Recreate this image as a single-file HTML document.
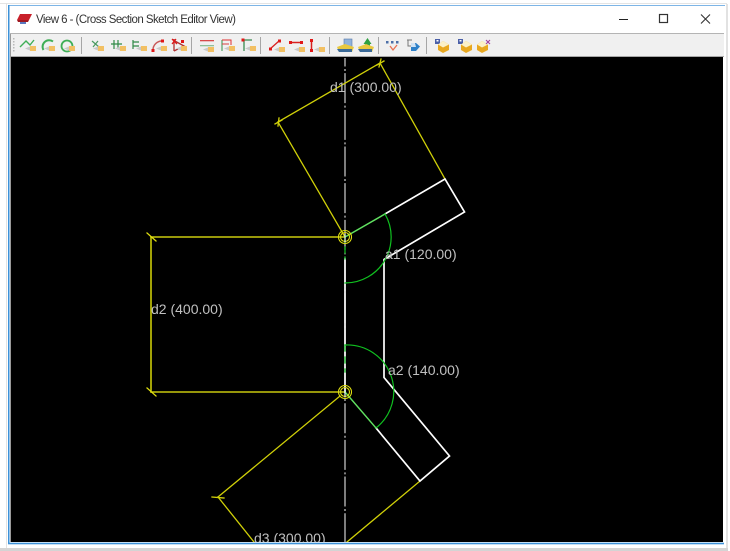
<!DOCTYPE html>
<html><head><meta charset="utf-8"><title>View 6</title>
<style>html,body{margin:0;padding:0;background:#fff;width:730px;height:551px;overflow:hidden}svg{display:block}</style>
</head><body>
<svg xmlns="http://www.w3.org/2000/svg" width="730" height="551" viewBox="0 0 730 551">
<defs>
<g id="tag"><rect x="0" y="0" width="6" height="5" fill="#f2c063"/><path d="M-5 2.500L0 0.500V4.500Z" fill="#c9c9c9"/></g>
<clipPath id="cv"><rect x="11" y="58" width="712" height="484"/></clipPath>
</defs>
<rect width="730" height="551" fill="#fff"/>
<rect x="0" y="3" width="727" height="1" fill="#e4e4e4"/>
<rect x="6" y="3" width="1" height="546" fill="#e2e2e2"/>
<rect x="726" y="4" width="2" height="546" fill="#e2e2e2"/>
<rect x="0" y="548" width="728" height="3" fill="#d4d4d4"/>
<rect x="7" y="5" width="718" height="543" fill="#fff"/>
<rect x="8" y="5" width="717" height="1" fill="#7db5e6"/>
<rect x="8" y="5" width="1.500" height="539" fill="#3d92d8"/>
<rect x="8" y="542.700" width="716" height="1.600" fill="#3d92d8"/>
<rect x="10" y="34" width="714" height="23" fill="#f0f0f0"/>
<rect x="10" y="33" width="714" height="1" fill="#b4b4b4"/>
<rect x="10" y="56" width="714" height="1" fill="#a8a8a8"/>
<rect x="10" y="34" width="1" height="508" fill="#9a9a9a"/>
<rect x="11" y="57" width="712" height="485" fill="#000"/>

<!-- title -->
<path d="M20 14H32L29 20H17Z" fill="#c8202a"/><path d="M17 20H29L28 22H18Z" fill="#a01820"/><rect x="20" y="22" width="6" height="2" fill="#5a78c0"/>
<text x="36" y="23" font-family="Liberation Sans,sans-serif" font-size="11.500" fill="#333" textLength="200">View 6 - (Cross Section Sketch Editor View)</text>
<rect x="619" y="19" width="9" height="1" fill="#222"/>
<rect x="659.500" y="14.500" width="8" height="8" fill="none" stroke="#333" stroke-width="1.200"/>
<path d="M701 14.500L710 23.500M710 14.500L701 23.500" stroke="#333" stroke-width="1.100" fill="none"/>

<!-- toolbar -->
<g fill="#b8b8b8"><rect x="13" y="38" width="1.500" height="1.500"/><rect x="13" y="41" width="1.500" height="1.500"/><rect x="13" y="44" width="1.500" height="1.500"/><rect x="13" y="47" width="1.500" height="1.500"/><rect x="13" y="50" width="1.500" height="1.500"/></g>
<g fill="#a6a6a6"><rect x="81" y="37" width="1" height="17"/><rect x="191" y="37" width="1" height="17"/><rect x="260" y="37" width="1" height="17"/><rect x="329" y="37" width="1" height="17"/><rect x="378" y="37" width="1" height="17"/><rect x="426" y="37" width="1" height="17"/></g>

<g fill="none" stroke="#3fae56" stroke-width="1.400">
<path d="M20 47L26 41L30 45L34 40"/>
<path d="M43.500 50A6.500 6.500 0 0 1 53 41.500" stroke-width="2"/>
<circle cx="67" cy="46" r="5.500" stroke-width="1.800"/>
</g>
<use href="#tag" x="30" y="46"/><use href="#tag" x="49" y="46"/><use href="#tag" x="69" y="46"/>

<g fill="none" stroke="#4a9a60" stroke-width="1.200">
<path d="M92 41L99 47M98 41L93 47"/>
<path d="M114 40V49M118 40V49M111 44H122" stroke="#2f8a46"/>
<path d="M133 40V49M133 42H139M133 46H139" stroke="#2f8a46"/>
</g>
<use href="#tag" x="98" y="46"/><use href="#tag" x="120" y="46"/><use href="#tag" x="141" y="46"/>
<path d="M153 50A9 9 0 0 1 162 41" fill="none" stroke="#c85a5a" stroke-width="1.500"/><rect x="151.500" y="49" width="3" height="3" fill="#e01818"/><rect x="161" y="39.500" width="3" height="3" fill="#e01818"/>
<use href="#tag" x="161" y="46"/>
<path d="M174 39V51M173 40L184 46L174 51" fill="none" stroke="#b03030" stroke-width="1.300"/><path d="M172 39L177 44M176 39L172 44" stroke="#e01818" stroke-width="1.300"/><rect x="181" y="40" width="3" height="3" fill="#e01818"/>
<use href="#tag" x="181" y="46"/>

<rect x="200" y="40" width="14" height="1.300" fill="#d84a4a"/><rect x="200" y="45" width="14" height="1.300" fill="#8fc09a"/>
<use href="#tag" x="208" y="47"/>
<path d="M222 40V51" stroke="#70b080" stroke-width="1.500"/><path d="M222 40H231V45" fill="none" stroke="#e03030" stroke-width="1"/><path d="M222 44H229" stroke="#d84040" stroke-width="1"/>
<use href="#tag" x="229" y="46"/>
<path d="M243 40H252M244 40V51" fill="none" stroke="#3a8a50" stroke-width="1.300"/><rect x="241.500" y="38.500" width="3" height="3" fill="#e01818"/>
<use href="#tag" x="250" y="46"/>

<path d="M270 49L279 41" stroke="#d82020" stroke-width="1.300"/><rect x="269" y="47.500" width="3" height="3" fill="#e01818"/><rect x="278" y="39.500" width="3" height="3" fill="#e01818"/>
<use href="#tag" x="279" y="47"/>
<path d="M290 42.500H301" stroke="#d82020" stroke-width="1.500"/><rect x="289" y="41" width="3" height="3" fill="#e01818"/><rect x="300" y="41" width="3" height="3" fill="#e01818"/>
<use href="#tag" x="299" y="47"/>
<path d="M311.500 40V51" stroke="#d82020" stroke-width="1.500"/><rect x="310" y="39" width="3" height="3" fill="#e01818"/><rect x="310" y="49" width="3" height="3" fill="#e01818"/>
<use href="#tag" x="319" y="47"/>

<rect x="344" y="39" width="8" height="10" fill="#8fb2dc" stroke="#5a7aa8" stroke-width=".6"/>
<path d="M337 47L345 44L354 47L352 52H339Z" fill="#e8c840"/><path d="M337 49H352V52H339Z" fill="#3b6a98"/>
<rect x="365" y="43" width="5" height="5" fill="#2fa040"/><path d="M363.500 44L367.500 38L371.500 44Z" fill="#2fa040"/>
<path d="M358 47L366 44L374 47L372 52H360Z" fill="#e8c840"/><path d="M358 49H372V52H360Z" fill="#3b6a98"/>

<g fill="#4d6fa8"><rect x="386" y="41" width="2.500" height="2.500"/><rect x="391" y="41" width="2.500" height="2.500"/><rect x="396" y="41" width="2.500" height="2.500"/></g>
<path d="M390 46L393 50L397 45" fill="none" stroke="#e87050" stroke-width="1.300"/>
<path d="M408 40V46H413" fill="none" stroke="#777" stroke-width="1"/><path d="M407 40H412" stroke="#777"/>
<path d="M411 43H416L420 46.500L416 51H411Z" fill="#2d80c8"/><path d="M411 43H415L416 47H411Z" fill="#cfe2f4"/>

<g id="cube"><rect x="435" y="39" width="5" height="5" fill="#4a5fa8"/><rect x="436.500" y="40" width="2" height="1.500" fill="#fff"/><path d="M443 41L449 44.500V50L443 53L438 50V44.500Z" fill="#e8a820"/><path d="M443 41L449 44.500L443 47.500L438 44.500Z" fill="#fbf0c8"/></g>
<use href="#cube" x="23"/>
<path d="M482 41L488 44.500V50L482 53L477 50V44.500Z" fill="#e8a820"/><path d="M482 41L488 44.500L482 47.500L477 44.500Z" fill="#fbf0c8"/>
<path d="M486 40L490 44M490 40L486 44" stroke="#a040a0" stroke-width="1.100"/>

<!-- canvas drawing -->
<g clip-path="url(#cv)" fill="none" stroke-linecap="square">
<path d="M345 58V542" stroke="#d0d0d0" stroke-width="1.200" stroke-dasharray="30 2.500 2 2.170" stroke-dashoffset="21.500" stroke-linecap="butt"/>
<g stroke="#e0e010" stroke-width="1.300">
<path d="M151 237H345" stroke="#f4f410"/>
<path d="M151 392H345" stroke="#f0f010"/>
<path d="M151 237V392" stroke="#d8d808" stroke-width="1.500"/>
<path d="M147 233L156 241M147 388L156 396"/>
</g>
<g stroke="#d0d008" stroke-width="1.300">
<path d="M345 237L278 122"/><path d="M278 122L380 63"/><path d="M380 63L445 179"/>
<path d="M275 124L282 120M279 118L278 126M377 65L384 61M381 59L379 67"/>
<path d="M340 396L218 497"/><path d="M218 497L254 542"/><path d="M420 481L347 542"/>
<path d="M212 497L224 498"/>
</g>
<g stroke="#fff" stroke-width="1.700">
<path d="M385 214L445 179L464.500 212L384 259.500V377.500L449.500 456L420 481L376 428"/>
<path d="M345 259V392"/>
</g>
<g stroke="#10c020" stroke-width="1.200">
<path d="M345 237L385 214" stroke="#60e060" stroke-width="1.500"/>
<path d="M385 214A46 46 0 0 1 345 283"/>
<path d="M345 237V259" stroke-dasharray="6 4"/>
<path d="M345 345A46.500 46.500 0 0 1 376 428"/>
<path d="M345 392L376 428" stroke="#60e060" stroke-width="1.500"/>
<path d="M345 345V372" stroke-dasharray="6 6"/>
</g>
<g stroke="#e0e010" stroke-width="1.100"><circle cx="345" cy="237" r="6.500"/><circle cx="345" cy="237" r="4.500"/><circle cx="345" cy="392" r="6.500"/><circle cx="345" cy="392" r="4.500"/></g>
<path d="M345 234V242M345 389V397" stroke="#fff" stroke-width="1"/>
</g>
<g clip-path="url(#cv)" font-family="Liberation Sans,sans-serif" font-size="14" fill="#c0c0c0">
<text x="330" y="92">d1 (300.00)</text>
<text x="151" y="314">d2 (400.00)</text>
<text x="385" y="259">a1 (120.00)</text>
<text x="388" y="375">a2 (140.00)</text>
<text x="254" y="543">d3 (300.00)</text>
</g>
</svg>
</body></html>
